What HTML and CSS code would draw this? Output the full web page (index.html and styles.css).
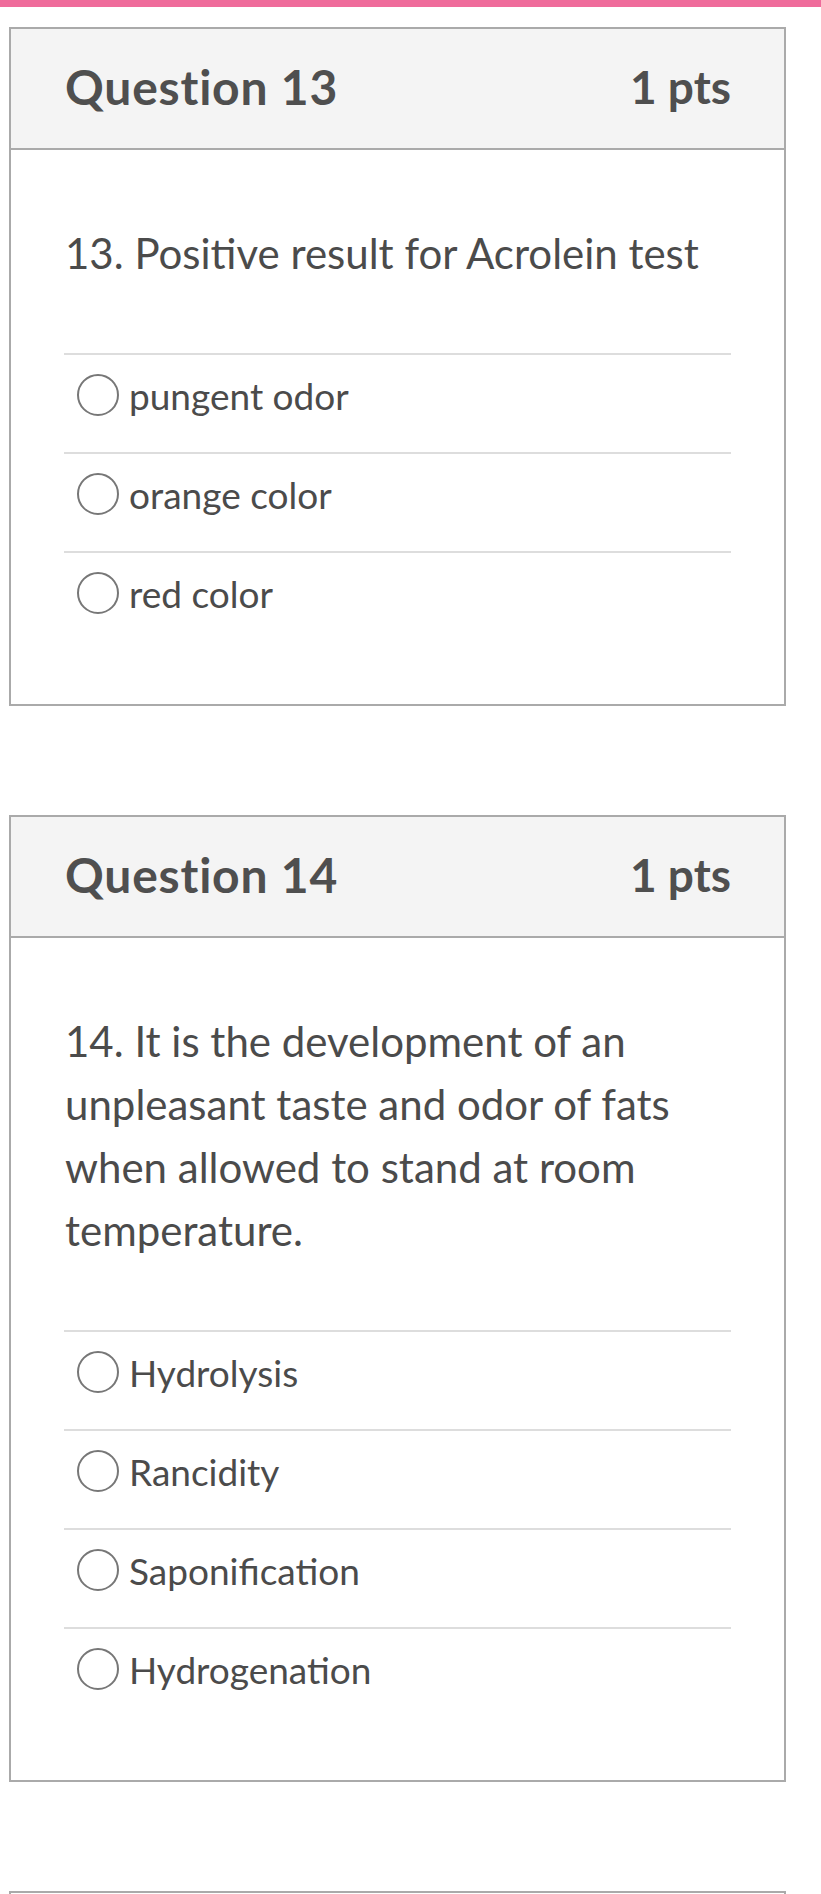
FILE: index.html
```html
<!DOCTYPE html>
<html>
<head>
<meta charset="utf-8">
<link rel="stylesheet" href="styles.css">
</head>
<body>
<div class="topbar"></div>
<main class="quiz">
  <section class="card">
    <header class="card-head">
      <span class="q-title">Question 13</span>
      <span class="q-pts">1 pts</span>
    </header>
    <div class="card-body">
      <p class="q-text">13. Positive result for Acrolein test</p>
      <ul class="answers">
        <li class="answer"><span class="radio"></span><span class="a-label">pungent odor</span></li>
        <li class="answer"><span class="radio"></span><span class="a-label">orange color</span></li>
        <li class="answer"><span class="radio"></span><span class="a-label">red color</span></li>
      </ul>
    </div>
  </section>
  <section class="card">
    <header class="card-head">
      <span class="q-title">Question 14</span>
      <span class="q-pts">1 pts</span>
    </header>
    <div class="card-body">
      <p class="q-text">14. It is the development of an unpleasant taste and odor of fats when allowed to stand at room temperature.</p>
      <ul class="answers">
        <li class="answer"><span class="radio"></span><span class="a-label">Hydrolysis</span></li>
        <li class="answer"><span class="radio"></span><span class="a-label">Rancidity</span></li>
        <li class="answer"><span class="radio"></span><span class="a-label">Saponification</span></li>
        <li class="answer"><span class="radio"></span><span class="a-label">Hydrogenation</span></li>
      </ul>
    </div>
  </section>
  <section class="card card-next"></section>
</main>
</body>
</html>
```

FILE: styles.css
```css
html, body {
  margin: 0;
  padding: 0;
  background: #ffffff;
}
body {
  font-family: Lato, "Open Sans", "Liberation Sans", sans-serif;
  color: #4b4b4b;
}
.topbar {
  height: 7px;
  background: #ef6b9b;
}
.quiz {
  padding: 20px 0 0 9px;
  width: 777px;
}
.card {
  border: 2px solid #aaaaaa;
  margin-bottom: 109px;
}
.card-head {
  display: flex;
  justify-content: space-between;
  align-items: center;
  box-sizing: border-box;
  height: 121px;
  padding: 0 53px 5px 54px;
  background: #f4f4f4;
  border-bottom: 2px solid #aaaaaa;
}
.q-title, .q-pts {
  font-weight: 700;
  font-size: 46px;
  color: #4f4f4f;
}
.q-title {
  font-size: 48px;
  letter-spacing: 0.8px;
}
.card-body {
  padding: 72px 53px 54px 53px;
}
.q-text {
  margin: 0 0 68px 0;
  font-size: 42px;
  line-height: 63px;
  padding-left: 1px;
}
.answers {
  list-style: none;
  margin: 0;
  padding: 0;
}
.answer {
  display: flex;
  align-items: center;
  border-top: 2px solid #dddddd;
  padding-bottom: 17px;
  box-sizing: border-box;
  height: 99px;
}
.radio {
  width: 38px;
  height: 38px;
  border: 2px solid #777777;
  border-radius: 50%;
  margin-left: 13px;
  margin-right: 10px;
  flex: none;
}
.a-label {
  font-size: 37px;
}
.card-next {
  height: 40px;
  border-bottom: none;
  margin-bottom: 0;
}
```
